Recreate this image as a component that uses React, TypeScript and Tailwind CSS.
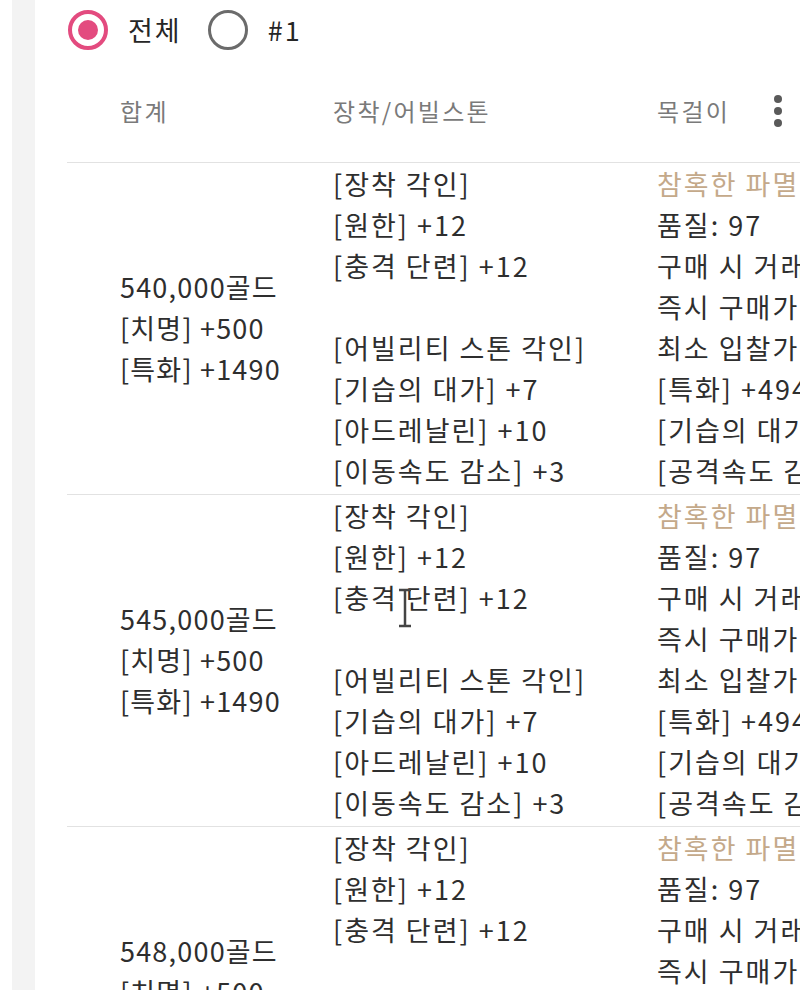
import React from "react";

type RowData = {
  id: number;
  total: string;
  stats: string[];
  engraving: string[];
  necklace: string[];
};

const engraving = [
  "[장착 각인]",
  "[원한] +12",
  "[충격 단련] +12",
  "",
  "[어빌리티 스톤 각인]",
  "[기습의 대가] +7",
  "[아드레날린] +10",
  "[이동속도 감소] +3",
];

const necklace = [
  "참혹한 파멸의 목걸이",
  "품질: 97",
  "구매 시 거래 2회 가능",
  "즉시 구매가: 500,000골드",
  "최소 입찰가: 450,000골드",
  "[특화] +494",
  "[기습의 대가] +3",
  "[공격속도 감소] +1",
];

const rows: RowData[] = [
  { id: 1, total: "540,000골드", stats: ["[치명] +500", "[특화] +1490"], engraving, necklace },
  { id: 2, total: "545,000골드", stats: ["[치명] +500", "[특화] +1490"], engraving, necklace },
  { id: 3, total: "548,000골드", stats: ["[치명] +500", "[특화] +1490"], engraving, necklace },
];

const font = { fontFamily: '"Noto Sans CJK KR", "Noto Sans", sans-serif' };

const Radio = ({ checked, label }: { checked: boolean; label: string }) => (
  <label className="flex items-center gap-[20px]">
    {checked ? (
      <span className="w-[40px] h-[40px] rounded-full border-[4px] border-[#e34b7f] flex items-center justify-center">
        <span className="w-[20px] h-[20px] rounded-full bg-[#e34b7f]" />
      </span>
    ) : (
      <span className="w-[40px] h-[40px] rounded-full border-[3px] border-[#6b6b6b]" />
    )}
    <span className="text-[27px] tracking-[2px] text-[#262626]">{label}</span>
  </label>
);

const TableRow = ({ total, stats, engraving, necklace }: RowData) => (
  <div className="flex border-b border-[#e2e2e2] pb-[3px]">
    <div className="w-[266px] shrink-0 pl-[53px] flex flex-col justify-center tracking-[1.2px]">
      <div>{total}</div>
      {stats.map((s) => (
        <div key={s}>{s}</div>
      ))}
    </div>
    <div className="w-[324px] shrink-0 tracking-[2px]">
      {engraving.map((line, i) => (
        <div key={i} className="h-[41px]">
          {line}
        </div>
      ))}
    </div>
    <div className="flex-1 min-w-0 whitespace-nowrap tracking-[2px]">
      {necklace.map((line, i) => (
        <div key={i} className={i === 0 ? "text-[#c4a98a]" : ""}>
          {line}
        </div>
      ))}
    </div>
  </div>
);

export default function App() {
  return (
    <div className="w-[800px] h-[990px] overflow-hidden bg-white flex relative" style={font}>
      <div className="w-[12px] shrink-0 bg-white" />
      <div className="w-[23px] shrink-0 bg-[#f3f3f3]" />
      <div className="flex-1 min-w-0 overflow-hidden">
        <div className="h-[60px] pl-[33px] flex items-center gap-[26px]">
          <Radio checked label="전체" />
          <Radio checked={false} label="#1" />
        </div>
        <div className="ml-[32px] flex items-center h-[103px] border-b border-[#e2e2e2] text-[24px] tracking-[2.3px] text-[#7a7a7a] whitespace-nowrap">
          <div className="w-[266px] shrink-0 pl-[53px]">합계</div>
          <div className="w-[324px] shrink-0">장착/어빌스톤</div>
          <div className="flex-1 flex items-center">
            <span>목걸이</span>
            <svg className="ml-[42px] shrink-0" width="12" height="36" viewBox="0 0 12 36">
              <circle cx="6" cy="6" r="4" fill="#5a5a5a" />
              <circle cx="6" cy="18" r="4" fill="#5a5a5a" />
              <circle cx="6" cy="30" r="4" fill="#5a5a5a" />
            </svg>
          </div>
        </div>
        <div className="ml-[32px] text-[27px] leading-[41px] text-[#2e2e2e] whitespace-nowrap">
          {rows.map((r) => (
            <TableRow key={r.id} {...r} />
          ))}
        </div>
      </div>
      <svg className="absolute left-[397px] top-[588px]" width="16" height="40" viewBox="0 0 16 40">
        <path d="M2 2h12M8 2v36M2 38h12" stroke="#444" strokeWidth="2.5" fill="none" />
      </svg>
    </div>
  );
}
